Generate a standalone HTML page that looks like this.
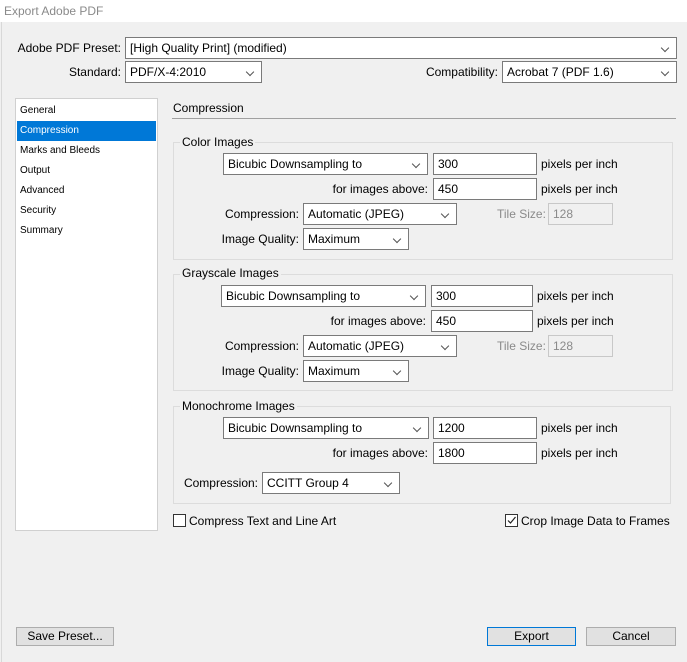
<!DOCTYPE html>
<html><head><meta charset="utf-8"><style>
*{box-sizing:border-box;margin:0;padding:0}
body{width:687px;height:662px;background:#f0f0f0;font-family:"Liberation Sans",sans-serif;font-size:12px;color:#000;position:relative;overflow:hidden}
.a{position:absolute;white-space:nowrap}
.title{left:0;top:0;width:687px;height:22px;background:#fff}
.sel{position:absolute;background:#fff;border:1px solid #7a7a7a;height:22px;line-height:20px;padding-left:4px}
.sel::after{content:"";position:absolute;right:8px;top:7px;width:5px;height:5px;border-right:1px solid #555;border-bottom:1px solid #555;transform:rotate(45deg)}
.inp{position:absolute;background:#fff;border:1px solid #7a7a7a;height:22px;line-height:20px;padding-left:4px}
.dis{background:#f0f0f0;border-color:#c8c8c8;color:#8a8a8a}
.lbl{position:absolute;white-space:nowrap;line-height:22px}
.r{text-align:right}
.grp{position:absolute;border:1px solid #dcdcdc}
.leg{position:absolute;background:#f0f0f0;padding:0 2px;line-height:14px}
.list{position:absolute;left:15px;top:98px;width:143px;height:433px;background:#fff;border:1px solid #d0d0d0;font-size:10px;padding-top:2px}
.list div{height:20px;line-height:20px;padding-left:4px}
.btn{position:absolute;height:19px;line-height:17px;text-align:center;background:#e1e1e1;border:1px solid #adadad}
.cb{position:absolute;width:13px;height:13px;border:1px solid #333;background:#fff}
</style></head><body>
<div class="a title"></div>
<div class="a" style="left:1px;top:22px;width:1px;height:640px;background:#d8d8d8"></div>
<div class="a" style="left:4px;top:4px;color:#8a8a8a;font-size:12px">Export Adobe PDF</div>

<div class="lbl r" style="left:0;width:121px;top:37px">Adobe PDF Preset:</div>
<div class="sel" style="left:125px;top:37px;width:552px">[High Quality Print] (modified)</div>
<div class="lbl r" style="left:0;width:121px;top:61px">Standard:</div>
<div class="sel" style="left:125px;top:61px;width:137px">PDF/X-4:2010</div>
<div class="lbl r" style="left:380px;width:118px;top:61px">Compatibility:</div>
<div class="sel" style="left:502px;top:61px;width:175px">Acrobat 7 (PDF 1.6)</div>

<div class="list">
<div>General</div>
<div style="background:#0078d7;color:#fff;margin:0 1px;padding-left:3px">Compression</div>
<div>Marks and Bleeds</div><div>Output</div><div>Advanced</div><div>Security</div><div>Summary</div>
</div>

<div class="a" style="left:173px;top:100px;line-height:16px">Compression</div>
<div class="a" style="left:172px;top:118px;width:504px;height:1px;background:#a0a0a0"></div>

<!-- Color -->
<div class="grp" style="left:173px;top:142px;width:500px;height:118px"></div>
<div class="leg" style="left:180px;top:135px">Color Images</div>
<div class="sel" style="left:223px;top:153px;width:205px">Bicubic Downsampling to</div>
<div class="inp" style="left:433px;top:153px;width:104px">300</div>
<div class="lbl" style="left:541px;top:153px">pixels per inch</div>
<div class="lbl r" style="left:250px;width:178px;top:178px">for images above:</div>
<div class="inp" style="left:433px;top:178px;width:104px">450</div>
<div class="lbl" style="left:541px;top:178px">pixels per inch</div>
<div class="lbl r" style="left:180px;width:119px;top:203px">Compression:</div>
<div class="sel" style="left:303px;top:203px;width:154px">Automatic (JPEG)</div>
<div class="lbl" style="left:497px;top:203px;color:#8a8a8a">Tile Size:</div>
<div class="inp dis" style="left:548px;top:203px;width:65px">128</div>
<div class="lbl r" style="left:180px;width:119px;top:228px">Image Quality:</div>
<div class="sel" style="left:303px;top:228px;width:106px">Maximum</div>

<!-- Gray -->
<div class="grp" style="left:173px;top:274px;width:500px;height:117px"></div>
<div class="leg" style="left:180px;top:266px">Grayscale Images</div>
<div class="sel" style="left:221px;top:285px;width:205px">Bicubic Downsampling to</div>
<div class="inp" style="left:431px;top:285px;width:102px">300</div>
<div class="lbl" style="left:537px;top:285px">pixels per inch</div>
<div class="lbl r" style="left:250px;width:176px;top:310px">for images above:</div>
<div class="inp" style="left:431px;top:310px;width:102px">450</div>
<div class="lbl" style="left:537px;top:310px">pixels per inch</div>
<div class="lbl r" style="left:180px;width:119px;top:335px">Compression:</div>
<div class="sel" style="left:303px;top:335px;width:154px">Automatic (JPEG)</div>
<div class="lbl" style="left:497px;top:335px;color:#8a8a8a">Tile Size:</div>
<div class="inp dis" style="left:548px;top:335px;width:65px">128</div>
<div class="lbl r" style="left:180px;width:119px;top:360px">Image Quality:</div>
<div class="sel" style="left:303px;top:360px;width:106px">Maximum</div>

<!-- Mono -->
<div class="grp" style="left:173px;top:406px;width:498px;height:98px"></div>
<div class="leg" style="left:180px;top:399px">Monochrome Images</div>
<div class="sel" style="left:223px;top:417px;width:206px">Bicubic Downsampling to</div>
<div class="inp" style="left:433px;top:417px;width:104px">1200</div>
<div class="lbl" style="left:541px;top:417px">pixels per inch</div>
<div class="lbl r" style="left:250px;width:178px;top:442px">for images above:</div>
<div class="inp" style="left:433px;top:442px;width:104px">1800</div>
<div class="lbl" style="left:541px;top:442px">pixels per inch</div>
<div class="lbl r" style="left:150px;width:108px;top:472px">Compression:</div>
<div class="sel" style="left:262px;top:472px;width:138px">CCITT Group 4</div>

<div class="cb" style="left:173px;top:514px"></div>
<div class="lbl" style="left:189px;top:510px">Compress Text and Line Art</div>
<div class="cb" style="left:505px;top:514px"><svg width="11" height="11" style="position:absolute;left:0;top:0"><path d="M2 5.5 L4.5 8 L9.5 2" stroke="#222" stroke-width="1.2" fill="none"/></svg></div>
<div class="lbl" style="left:521px;top:510px">Crop Image Data to Frames</div>

<div class="btn" style="left:16px;top:627px;width:98px">Save Preset...</div>
<div class="btn" style="left:487px;top:627px;width:89px;border:1px solid #0078d7">Export</div>
<div class="btn" style="left:586px;top:627px;width:90px">Cancel</div>
</body></html>
